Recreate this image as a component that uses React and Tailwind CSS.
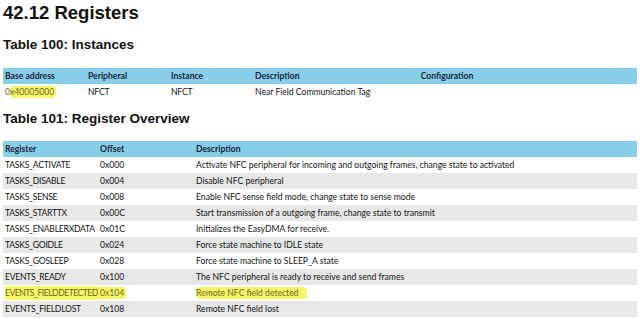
import React from "react";

const hl = "bg-[#f7f56a] text-[#6f6b1e]";

const regs = [
  ["TASKS_ACTIVATE", "0x000", "Activate NFC peripheral for incoming and outgoing frames, change state to activated"],
  ["TASKS_DISABLE", "0x004", "Disable NFC peripheral"],
  ["TASKS_SENSE", "0x008", "Enable NFC sense field mode, change state to sense mode"],
  ["TASKS_STARTTX", "0x00C", "Start transmission of a outgoing frame, change state to transmit"],
  ["TASKS_ENABLERXDATA", "0x01C", "Initializes the EasyDMA for receive."],
  ["TASKS_GOIDLE", "0x024", "Force state machine to IDLE state"],
  ["TASKS_GOSLEEP", "0x028", "Force state machine to SLEEP_A state"],
  ["EVENTS_READY", "0x100", "The NFC peripheral is ready to receive and send frames"],
  ["EVENTS_FIELDDETECTED", "0x104", "Remote NFC field detected", true],
  ["EVENTS_FIELDLOST", "0x108", "Remote NFC field lost"],
];

export default function App() {
  return (
    <div className="w-[640px] h-[319px] overflow-hidden bg-white pl-[3px] pr-[3px]">
      <h1 className="font-['Liberation_Sans',Arial,sans-serif] font-bold text-[18.5px] leading-[26px] text-[#111]">
        42.12 Registers
      </h1>
      <h2 className="mt-[10px] font-['Liberation_Sans',Arial,sans-serif] font-bold text-[13.5px] leading-[18px] text-[#111]">
        Table 100: Instances
      </h2>
      <div className="mt-[14px] font-['Lato',sans-serif] text-[8.6px] text-[#141414]">
        <div className="grid grid-cols-[83px_83px_84px_127px_134px_1fr] h-[16px] items-center bg-[#87ceeb] font-bold text-[#15233a]">
          <div className="pl-[2px]">Base address</div>
          <div className="pl-[2px]">Peripheral</div>
          <div className="pl-[2px]">Instance</div>
          <div className="pl-[2px]">Description</div>
          <div className="text-center">Configuration</div>
          <div></div>
        </div>
        <div className="grid grid-cols-[83px_83px_84px_127px_134px_1fr] h-[16px] items-center bg-white">
          <div className="pl-[2px]">
            <span className="text-[#6f6b1e]">0</span>
            <span className={`${hl} pr-[2px] py-[1px] rounded-sm`}>x40005000</span>
          </div>
          <div className="pl-[2px] tracking-[-0.2px]">NFCT</div>
          <div className="pl-[2px] tracking-[-0.2px]">NFCT</div>
          <div className="pl-[2px] whitespace-nowrap">Near Field Communication Tag</div>
          <div></div>
          <div></div>
        </div>
      </div>
      <h2 className="mt-[10px] font-['Liberation_Sans',Arial,sans-serif] font-bold text-[13.5px] leading-[18px] text-[#111]">
        Table 101: Register Overview
      </h2>
      <div className="mt-[13px] font-['Lato',sans-serif] text-[8.6px] text-[#141414]">
        <div className="grid grid-cols-[95px_96px_1fr] h-[16px] items-center bg-[#87ceeb] font-bold text-[#15233a]">
          <div className="pl-[2px]">Register</div>
          <div className="pl-[2px]">Offset</div>
          <div className="pl-[2px]">Description</div>
        </div>
        {regs.map(([r, o, d, h], i) => (
          <div
            key={r}
            className={`grid grid-cols-[95px_96px_1fr] h-[16px] items-center ${i % 2 === 1 ? "bg-[#e8e8e8]" : "bg-white"}`}
          >
            {h ? (
              <>
                <div className="pl-[2px] whitespace-nowrap tracking-[-0.5px] overflow-hidden">
                  <span className={`${hl} block py-[1px]`}>{r}</span>
                </div>
                <div className="whitespace-nowrap">
                  <span className={`${hl} pl-[2px] pr-[2px] py-[1px] rounded-r-sm`}>{o}</span>
                </div>
                <div className="pl-[2px] whitespace-nowrap">
                  <span className={`${hl} pr-[8px] py-[1px] rounded-sm`}>{d}</span>
                </div>
              </>
            ) : (
              <>
                <div className="pl-[2px] whitespace-nowrap tracking-[-0.25px]">{r}</div>
                <div className="pl-[2px]">{o}</div>
                <div className="pl-[2px] whitespace-nowrap">{d}</div>
              </>
            )}
          </div>
        ))}
      </div>
    </div>
  );
}
